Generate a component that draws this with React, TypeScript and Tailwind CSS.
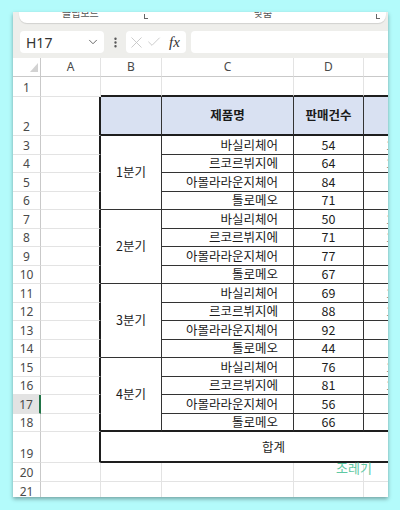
import { ChevronDown, Check, X, EllipsisVertical } from "lucide-react";

type Item = { name: string; count: number; mark?: boolean };

const quarters: { label: string; items: Item[] }[] = [
  {
    label: "1분기",
    items: [
      { name: "바실리체어", count: 54, mark: true },
      { name: "르코르뷔지에", count: 64, mark: true },
      { name: "아몰라라운지체어", count: 84 },
      { name: "톨로메오", count: 71 },
    ],
  },
  {
    label: "2분기",
    items: [
      { name: "바실리체어", count: 50, mark: true },
      { name: "르코르뷔지에", count: 71, mark: true },
      { name: "아몰라라운지체어", count: 77 },
      { name: "톨로메오", count: 67 },
    ],
  },
  {
    label: "3분기",
    items: [
      { name: "바실리체어", count: 69, mark: true },
      { name: "르코르뷔지에", count: 88, mark: true },
      { name: "아몰라라운지체어", count: 92 },
      { name: "톨로메오", count: 44 },
    ],
  },
  {
    label: "4분기",
    items: [
      { name: "바실리체어", count: 76, mark: true },
      { name: "르코르뷔지에", count: 81, mark: true },
      { name: "아몰라라운지체어", count: 56 },
      { name: "톨로메오", count: 66 },
    ],
  },
];

const ui = "font-['Noto_Sans','Liberation_Sans',sans-serif]";
const kr = "font-['Noto_Sans_CJK_KR','Noto_Sans',sans-serif]";

function RowHead({ n, active = false }: { n: number; active?: boolean }) {
  return (
    <div
      className={`flex items-end justify-center border-b border-b-[#e3e3e3] pb-[1px] text-[12px] leading-[14px] text-[#4a4a4a] ${ui} ${
        active
          ? "border-r-2 border-r-[#217346] bg-[#e3e3e3] text-[#2b2b2b]"
          : "border-r border-r-[#c9c9c9] bg-white"
      }`}
    >
      {n}
    </div>
  );
}

const gridCell = "border-r border-b border-r-[#e3e3e3] border-b-[#e3e3e3] bg-white";

function Sheet() {
  const rows: React.ReactNode[] = [];

  // column headers
  rows.push(
    <div key="corner" className="relative border-b border-r border-b-[#c9c9c9] border-r-[#c9c9c9] bg-white">
      <svg width="8" height="9" viewBox="0 0 8 9" className="absolute bottom-[4px] right-[2px]">
        <polygon points="8,0 8,9 0,9" fill="#d2d2d2" />
      </svg>
    </div>
  );
  ["A", "B", "C", "D", "E"].forEach((c) =>
    rows.push(
      <div
        key={"h" + c}
        className={`flex items-center justify-center border-b border-r border-b-[#c9c9c9] border-r-[#e3e3e3] bg-white text-[12px] text-[#4a4a4a] ${ui}`}
      >
        {c}
      </div>
    )
  );

  // row 1
  rows.push(<RowHead key="r1" n={1} />);
  rows.push(<div key="r1a" className={gridCell} />);
  for (let i = 0; i < 4; i++)
    rows.push(
      <div key={"r1" + i} className="border-r border-r-[#e3e3e3] border-b-2 border-b-[#1e1e1e] bg-white" />
    );

  // row 2 header
  rows.push(<RowHead key="r2" n={2} />);
  rows.push(<div key="r2a" className="border-b border-b-[#e3e3e3] border-r-2 border-r-[#1e1e1e] bg-white" />);
  rows.push(<div key="r2b" className="border-r border-r-[#333] border-b-2 border-b-[#1e1e1e] bg-[#d9e1f2]" />);
  rows.push(
    <div
      key="r2c"
      className={`flex items-center justify-center border-r border-r-[#333] border-b-2 border-b-[#1e1e1e] bg-[#d9e1f2] text-[12.5px] font-bold text-[#1a1a1a] ${kr}`}
    >
      제품명
    </div>
  );
  rows.push(
    <div
      key="r2d"
      className={`flex items-center justify-center border-r border-r-[#333] border-b-2 border-b-[#1e1e1e] bg-[#d9e1f2] text-[12.5px] font-bold text-[#1a1a1a] ${kr}`}
    >
      판매건수
    </div>
  );
  rows.push(<div key="r2e" className="border-r border-r-[#333] border-b-2 border-b-[#1e1e1e] bg-[#d9e1f2]" />);

  // rows 3-18
  let r = 3;
  quarters.forEach((q, qi) => {
    const last = qi === quarters.length - 1;
    q.items.forEach((it, ii) => {
      const bottom = last && ii === 3 ? "border-b-2 border-b-[#1e1e1e]" : "border-b border-b-[#333]";
      rows.push(<RowHead key={"rh" + r} n={r} active={r === 17} />);
      rows.push(<div key={"ra" + r} className="border-b border-b-[#e3e3e3] border-r-2 border-r-[#1e1e1e] bg-white" />);
      if (ii === 0)
        rows.push(
          <div
            key={"rb" + r}
            className={`row-span-4 flex items-center justify-center border-r border-r-[#333] ${
              last ? "border-b-2 border-b-[#1e1e1e]" : "border-b border-b-[#333]"
            } bg-white text-[12.5px] text-[#1c1c1c] ${kr}`}
          >
            {q.label}
          </div>
        );
      rows.push(
        <div
          key={"rc" + r}
          className={`flex items-center justify-end border-r border-r-[#333] ${bottom} bg-white pr-[15px] text-[12.5px] leading-none text-[#1c1c1c] ${kr}`}
        >
          {it.name}
        </div>
      );
      rows.push(
        <div
          key={"rd" + r}
          className={`flex items-center justify-center border-r border-r-[#333] ${bottom} bg-white text-[12.5px] leading-none text-[#1c1c1c] ${kr}`}
        >
          {it.count}
        </div>
      );
      rows.push(
        <div
          key={"re" + r}
          className={`flex items-center overflow-hidden border-r border-r-[#333] ${bottom} bg-white pl-[22px] text-[12.5px] leading-none text-[#888] ${kr}`}
        >
          {it.mark ? "1" : ""}
        </div>
      );
      r++;
    });
  });

  // row 19 total
  rows.push(<RowHead key="r19" n={19} />);
  rows.push(<div key="r19a" className="border-b border-b-[#e3e3e3] border-r-2 border-r-[#1e1e1e] bg-white" />);
  rows.push(
    <div
      key="r19b"
      className={`col-span-4 flex items-center border-b-2 border-b-[#1e1e1e] bg-white pl-[161px] pt-[1px] text-[12.5px] text-[#1c1c1c] ${kr}`}
    >
      합계
    </div>
  );

  // row 20
  rows.push(<RowHead key="r20" n={20} />);
  rows.push(<div key="r20a" className={gridCell} />);
  rows.push(<div key="r20b" className={gridCell} />);
  rows.push(<div key="r20c" className={gridCell} />);
  rows.push(
    <div key="r20d" className={`${gridCell} relative`}>
      <span className={`absolute left-[42px] top-[-5px] whitespace-nowrap text-[13px] text-[#5fc9a3] ${kr}`}>조레기</span>
    </div>
  );
  rows.push(<div key="r20e" className={gridCell} />);

  // row 21
  rows.push(<RowHead key="r21" n={21} />);
  for (let i = 0; i < 5; i++) rows.push(<div key={"r21" + i} className={gridCell} />);

  return (
    <div className="grid grid-cols-[28px_60px_61px_132px_70px_60px] grid-rows-[19px_19.5px_39.5px_repeat(16,18.5px)_31px_19px_19px]">
      {rows}
    </div>
  );
}

export default function App() {
  return (
    <div className="h-[510px] w-[400px] overflow-hidden bg-[#b3fbfb] pl-[13px] pt-[12px]">
      <div className="flex h-[485px] w-[375px] flex-col overflow-hidden bg-[#eeeeeb] shadow-[0_2px_4px_rgba(0,0,0,0.35)]">
        {/* ribbon bottom strip */}
        <div className="ml-[6px] mr-[2px] flex h-[11px] shrink-0 items-start overflow-hidden rounded-b-[8px] bg-white shadow-[0_1px_1px_rgba(0,0,0,0.12)]">
          <span className={`ml-[43px] mt-[-6px] shrink-0 whitespace-nowrap text-[10px] leading-[14px] text-[#555] ${kr}`}>
            클립보드
          </span>
          <span className="ml-[45px] mt-[2px] h-[5px] w-[4px] shrink-0 border-b border-l border-[#666]" />
          <span className={`ml-[106px] mt-[-6px] shrink-0 whitespace-nowrap text-[10px] leading-[14px] text-[#555] ${kr}`}>
            맞춤
          </span>
          <span className="ml-[104px] mt-[2px] h-[5px] w-[4px] shrink-0 border-b border-l border-[#666]" />
        </div>

        {/* formula bar */}
        <div className="flex h-[35px] shrink-0 items-start pt-[8px]">
          <div className="ml-[7px] flex h-[22px] w-[84px] shrink-0 items-center justify-between rounded-[4px] bg-white pl-[6px] pr-[4px]">
            <span className={`text-[14px] text-[#333] ${ui}`}>H17</span>
            <ChevronDown size={14} strokeWidth={1.5} className="text-[#555]" />
          </div>
          <div className="ml-[3px] flex h-[22px] w-[16px] shrink-0 items-center justify-center">
            <EllipsisVertical size={13} strokeWidth={2.4} className="text-[#555]" />
          </div>
          <div className="ml-[3px] flex h-[22px] w-[60px] shrink-0 items-center rounded-[4px] bg-white pl-[1px]">
            <X size={19} strokeWidth={1.1} className="text-[#c4c4c4]" />
            <Check size={16} strokeWidth={1.3} className="text-[#c4c4c4]" />
            <span className="ml-[7px] font-['Liberation_Serif',serif] text-[15px] italic leading-none text-[#333]">
              fx
            </span>
          </div>
          <div className="ml-[5px] h-[22px] flex-1 rounded-l-[4px] bg-white" />
        </div>

        <Sheet />
      </div>
    </div>
  );
}
